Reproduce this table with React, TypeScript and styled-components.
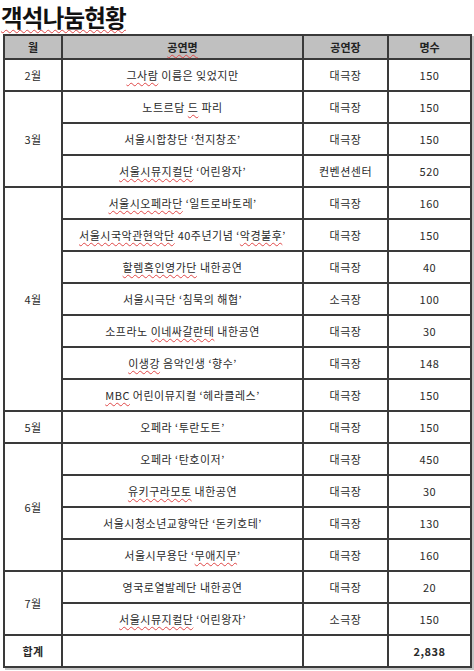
import React from "react"
import styled, { createGlobalStyle } from "styled-components"

const GlobalStyle = createGlobalStyle`
  html, body {
    margin: 0;
    padding: 0;
    background: #ffffff;
  }
  body {
    font-family: "Noto Sans CJK KR", "Noto Sans", sans-serif;
    color: #222;
  }
`

type Item = { name: React.ReactNode; hall: string; count: string }
type Group = { month: string; items: Item[] }

const Sp = styled.span`
  text-decoration: underline wavy #e04848;
  text-decoration-thickness: 1px;
  text-underline-offset: 2px;
`

const Data: Group[] = [
    { month: "2월", items: [
        { name: <><Sp>그사람</Sp> 이름은 잊었지만</>, hall: "대극장", count: "150" },
    ] },
    { month: "3월", items: [
        { name: <>노트르담 <Sp>드</Sp> 파리</>, hall: "대극장", count: "150" },
        { name: "서울시합창단 ‘천지창조’", hall: "대극장", count: "150" },
        { name: <><Sp>서울시뮤지컬단</Sp> ‘어린왕자’</>, hall: "컨벤션센터", count: "520" },
    ] },
    { month: "4월", items: [
        { name: <><Sp>서울시오페라단</Sp> ‘일트로바토레’</>, hall: "대극장", count: "160" },
        { name: <><Sp>서울시국악관현악단</Sp> 40주년기념 ‘<Sp>악경불후</Sp>’</>, hall: "대극장", count: "150" },
        { name: <><Sp>할렘흑인영가단</Sp> 내한공연</>, hall: "대극장", count: "40" },
        { name: "서울시극단 ‘침묵의 해협’", hall: "소극장", count: "100" },
        { name: <>소프라노 <Sp>이네싸갈란테</Sp> 내한공연</>, hall: "대극장", count: "30" },
        { name: <><Sp>이생강</Sp> 음악인생 ‘향수’</>, hall: "대극장", count: "148" },
        { name: <><Sp>MBC</Sp> 어린이뮤지컬 ‘헤라클레스’</>, hall: "대극장", count: "150" },
    ] },
    { month: "5월", items: [
        { name: "오페라 ‘투란도트’", hall: "대극장", count: "150" },
    ] },
    { month: "6월", items: [
        { name: "오페라 ‘탄호이저’", hall: "대극장", count: "450" },
        { name: <><Sp>유키구라모토</Sp> 내한공연</>, hall: "대극장", count: "30" },
        { name: "서울시청소년교향악단 ‘돈키호테’", hall: "대극장", count: "130" },
        { name: <>서울시무용단 ‘<Sp>무애지무</Sp>’</>, hall: "대극장", count: "160" },
    ] },
    { month: "7월", items: [
        { name: "영국로열발레단 내한공연", hall: "대극장", count: "20" },
        { name: <><Sp>서울시뮤지컬단</Sp> ‘어린왕자’</>, hall: "소극장", count: "150" },
    ] },
]

export default function App() {
    return (
        <Page>
            <GlobalStyle />
            <Title><Sp>객석나눔현황</Sp></Title>
            <Table>
                <colgroup>
                    <col style={{ width: 58 }} />
                    <col style={{ width: 241 }} />
                    <col style={{ width: 85 }} />
                    <col style={{ width: 83 }} />
                </colgroup>
                <thead>
                    <tr>
                        <Th>월</Th>
                        <Th><Sp>공연명</Sp></Th>
                        <Th>공연장</Th>
                        <Th>명수</Th>
                    </tr>
                </thead>
                <tbody>
                    {Data.map((group) =>
                        group.items.map((item, i) => (
                            <tr key={group.month + i}>
                                {i === 0 && <Td rowSpan={group.items.length}>{group.month}</Td>}
                                <Td>{item.name}</Td>
                                <Td>{item.hall}</Td>
                                <Td>{item.count}</Td>
                            </tr>
                        ))
                    )}
                    <tr>
                        <Td $bold>합계</Td>
                        <Td />
                        <Td />
                        <Td $bold>2,838</Td>
                    </tr>
                </tbody>
            </Table>
        </Page>
    )
}

const Page = styled.div`
width: 474px;
height: 671px;
overflow: hidden;
`

const Title = styled.h1`
margin: 0;
padding: 0 0 0 1px;
font-family: "Noto Sans CJK KR", sans-serif;
font-size: 23.5px;
font-weight: 700;
line-height: 34px;
color: #111;
letter-spacing: -0.8px;
`

const Table = styled.table`
margin-left: 3px;
width: 468px;
border-collapse: collapse;
table-layout: fixed;
box-shadow: 2px 2px 0 #c4c4c4;
`

const Th = styled.th`
height: 22px;
padding: 0;
background: #c0c0c0;
border: 2px solid #3a3a3a;
font-size: 11px;
font-weight: 700;
color: #222;
text-align: center;
`

const Td = styled.td<{ $bold?: boolean }>`
height: 30px;
padding: 0;
border: 2px solid #3a3a3a;
font-size: 11px;
font-weight: ${(p) => (p.$bold ? 700 : 400)};
color: #2a2a2a;
text-align: center;
white-space: nowrap;
letter-spacing: 0.5px;
`
